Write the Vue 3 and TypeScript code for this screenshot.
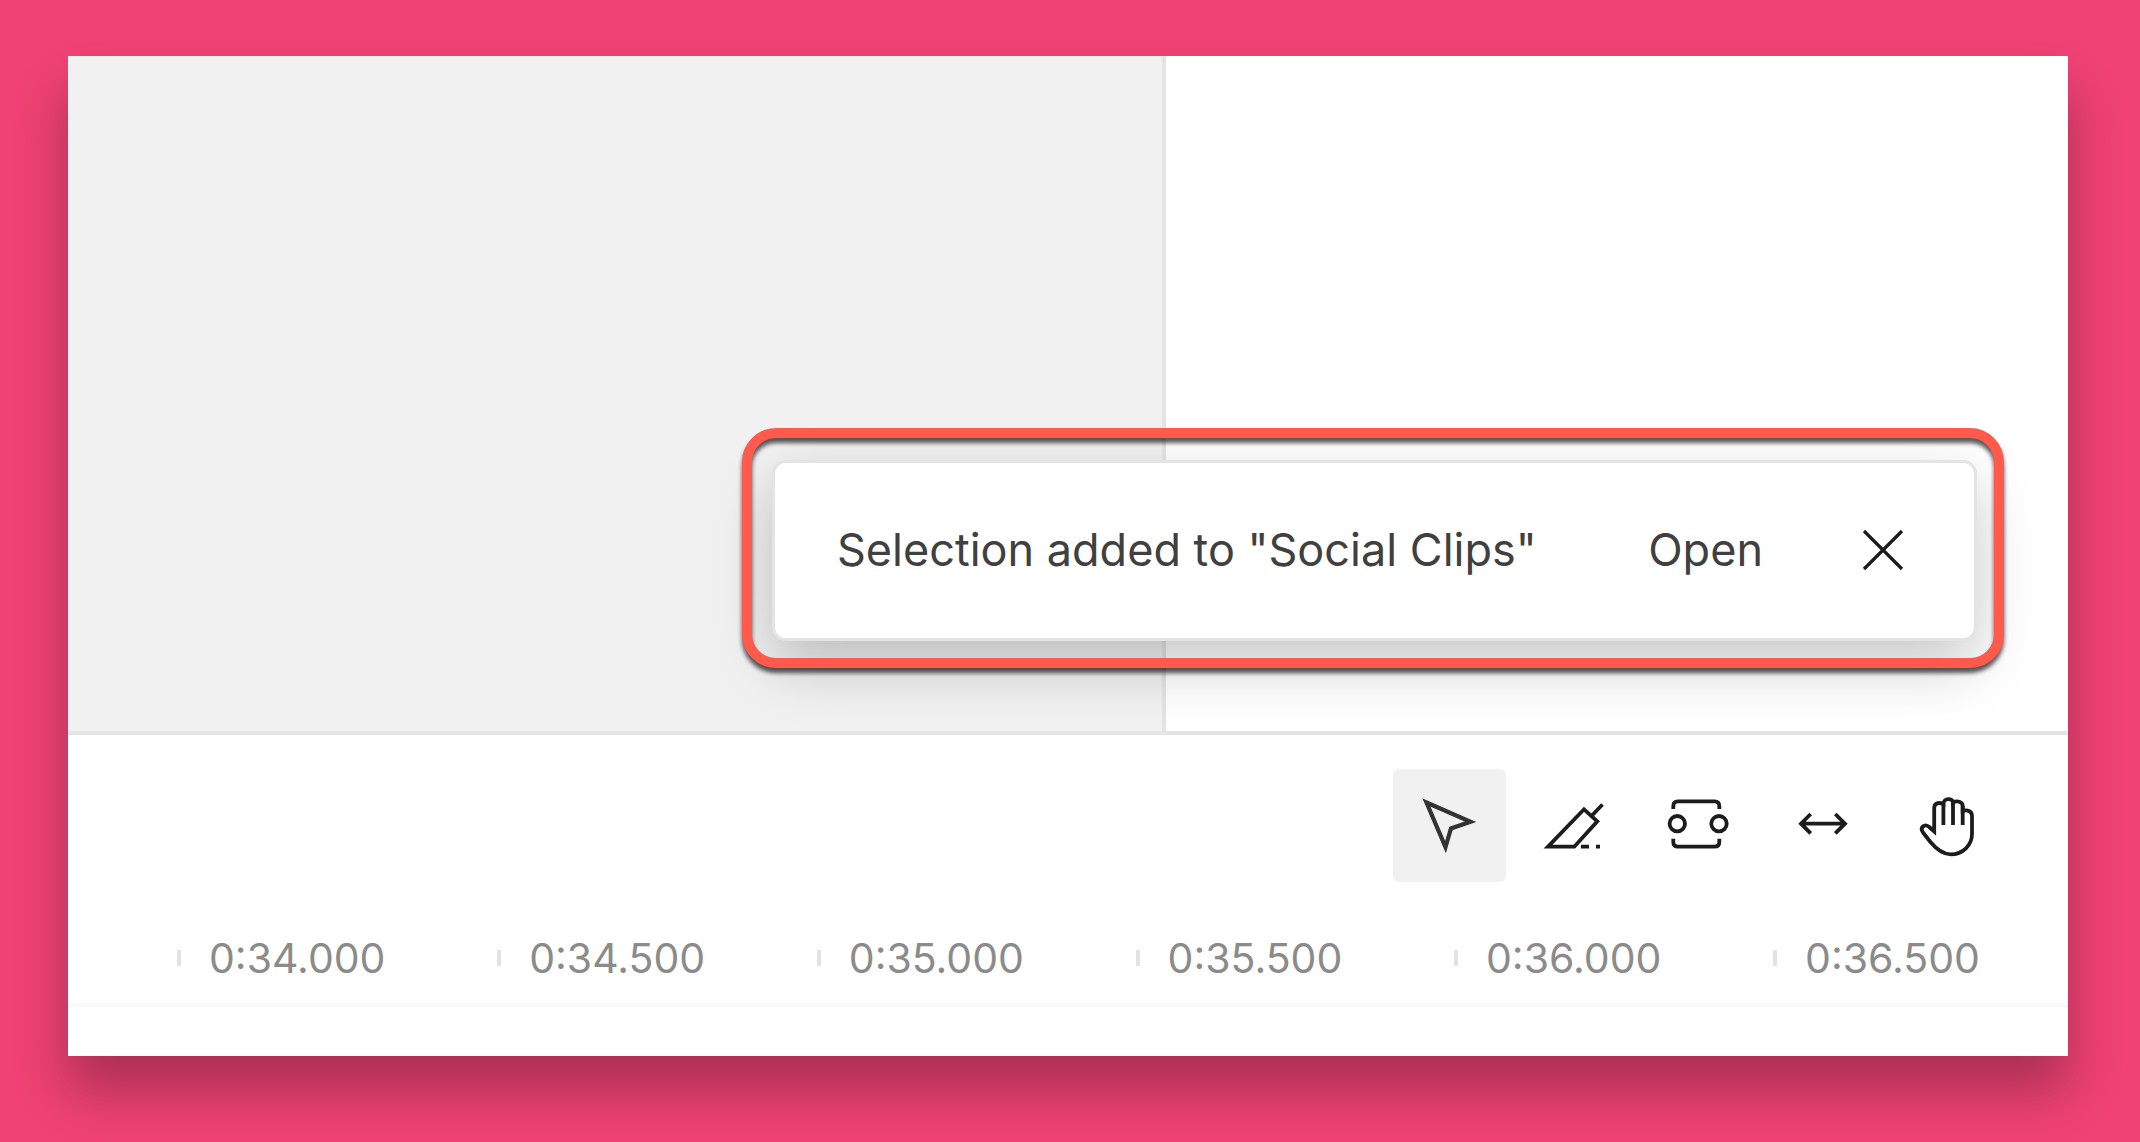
<script setup lang="ts">
import { ref } from 'vue'

interface Tool {
  id: string
  label: string
}

const tools: Tool[] = [
  { id: 'select', label: 'Select' },
  { id: 'razor', label: 'Razor' },
  { id: 'range', label: 'Range' },
  { id: 'slip', label: 'Slip' },
  { id: 'hand', label: 'Hand' },
]

const activeTool = ref('select')
const toastOpen = ref(true)

const marks: string[] = ['0:34.000', '0:34.500', '0:35.000', '0:35.500', '0:36.000', '0:36.500']
</script>

<template>
  <main class="page">
    <div class="window">
      <section class="stage">
        <div class="canvas"></div>
        <div class="side"></div>
        <div v-if="toastOpen" class="toast" role="status">
          <p class="message">Selection added to "Social Clips"</p>
          <button class="open" type="button">Open</button>
          <button class="close" type="button" aria-label="Close" @click="toastOpen = false">
            <svg viewBox="0 0 44 44" aria-hidden="true">
              <path d="M3 3 41 41M41 3 3 41" />
            </svg>
          </button>
        </div>
      </section>

      <section class="timeline">
        <div class="tools" role="toolbar" aria-label="Timeline tools">
          <button
            v-for="tool in tools"
            :key="tool.id"
            type="button"
            class="tool"
            :class="{ active: tool.id === activeTool }"
            :aria-label="tool.label"
            :aria-pressed="tool.id === activeTool"
            @click="activeTool = tool.id"
          >
            <svg viewBox="0 0 113 113" aria-hidden="true">
              <path v-if="tool.id === 'select'" class="pointer" d="M33.5 33.5 77.5 52.8 58 59.5 52.5 78Z" />
              <g v-else-if="tool.id === 'razor'">
                <path d="M30 77.7H56.3L79.3 52.3 66 40.3Z" />
                <path d="M73.5 47 84.5 35.5M63 77.7H71M78 77.7H82" />
              </g>
              <g v-else-if="tool.id === 'range'">
                <path d="M30.3 40V37Q30.3 32.3 35 32.3H71.6Q76.3 32.3 76.3 37V40" />
                <path d="M30.3 69.7V73Q30.3 77.7 35 77.7H71.6Q76.3 77.7 76.3 73V69.7" />
                <circle cx="34.3" cy="54.7" r="7.7" />
                <circle cx="76" cy="54.7" r="7.7" />
              </g>
              <path v-else-if="tool.id === 'slip'" d="M33 54.7H77M42.7 45 33 54.7 42.7 64.4M67.3 45 77 54.7 67.3 64.4" />
              <g v-else>
                <path
                  d="M41.2 62.5V39C41.2 34 46 33 50.4 35V35C50.4 28.7 60 28.7 60 33.5C64 31.2 69.7 32.5 69.7 37V42.2C74 40.4 79 42 79 47V65C79 76 70 85.3 57.7 85.3C49 85.3 42 78.5 37 72.5L30 63.5C26.4 58.5 31.5 54.5 35.7 57.5Z"
                />
                <path d="M50.4 34V56M60 33V56M69.7 37V56" />
              </g>
            </svg>
          </button>
        </div>
        <ol class="ruler">
          <li v-for="mark in marks" :key="mark">{{ mark }}</li>
        </ol>
        <div class="track"></div>
      </section>
    </div>
  </main>
</template>

<style>
body {
  margin: 0;
  background: #f04274;
}
</style>

<style scoped>
.page {
  box-sizing: border-box;
  display: flex;
  min-height: 100vh;
  padding: 56px 72px 86px 68px;
  overflow: hidden;
  background: #f04274;
  font-family: Inter, "Liberation Sans", sans-serif;
}

.window {
  flex: 1;
  display: flex;
  flex-direction: column;
  background: #fff;
  box-shadow: 0 35px 50px rgba(0, 0, 0, 0.29);
}

.stage {
  position: relative;
  flex: 1;
  display: flex;
  overflow: hidden;
  border-bottom: 4px solid #e4e4e4;
}

.canvas {
  flex: 1;
  background: #f1f1f1;
  border-right: 4px solid #e4e4e4;
}

.side {
  flex: 0 0 902px;
}

.toast {
  position: absolute;
  right: 91px;
  bottom: 90px;
  box-sizing: border-box;
  display: flex;
  align-items: center;
  width: 1205px;
  height: 181px;
  padding: 0 69px 2px 62px;
  border: 3px solid #e4e4e4;
  border-radius: 14px;
  background: #fff;
  box-shadow: 0 24px 60px rgba(0, 0, 0, 0.22);
  color: #404040;
}

.toast::after {
  content: "";
  position: absolute;
  inset: -35px -30px -30px -33px;
  border: 10px solid #ff5a4c;
  border-radius: 34px;
  filter: drop-shadow(0 5px 2px rgba(0, 0, 0, 0.65));
  pointer-events: none;
}

.message {
  flex: 1;
  margin: 0;
  font-size: 45px;
  line-height: 56px;
  white-space: nowrap;
}

button {
  padding: 0;
  border: 0;
  background: none;
  color: inherit;
  font: inherit;
  cursor: pointer;
}

.open {
  margin-right: 98px;
  font-size: 45px;
  line-height: 56px;
}

.close {
  width: 44px;
  height: 44px;
}

svg {
  display: block;
  width: 100%;
  height: 100%;
  fill: none;
  stroke: #1c1c1c;
  stroke-width: 3.8;
}

.close svg {
  stroke-width: 3.2;
}

.tools {
  display: flex;
  justify-content: flex-end;
  gap: 12px;
  padding: 34px 62px 0;
}

.tool {
  width: 113px;
  height: 113px;
  border-radius: 6px;
}

.tool.active {
  background: #f1f1f1;
}

.pointer {
  stroke: #333;
  stroke-width: 4.2;
}

.ruler {
  display: flex;
  justify-content: space-between;
  margin: 0;
  padding: 60px 88px 33px 109px;
  background: linear-gradient(#fff, #f8f8f8) bottom / 100% 7px no-repeat;
  list-style: none;
  color: #8b8b8b;
  font-size: 41px;
  line-height: 32px;
}

.ruler li {
  display: flex;
  align-items: center;
  gap: 28px;
}

.ruler li::before {
  content: "";
  width: 4px;
  height: 16px;
  background: #e2e2e2;
}

.track {
  height: 49px;
}
</style>
